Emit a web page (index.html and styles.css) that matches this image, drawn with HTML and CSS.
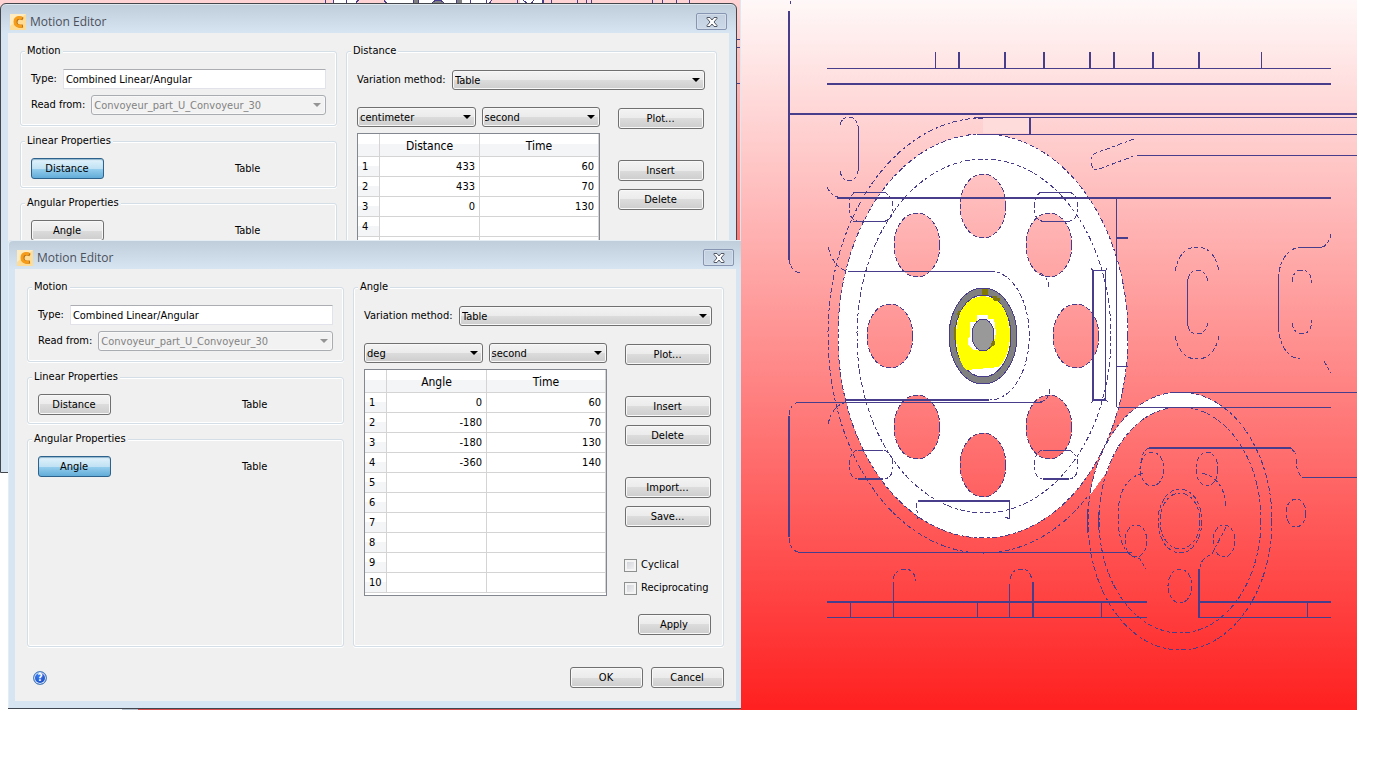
FILE: index.html
```html
<!DOCTYPE html>
<html lang="en">
<head>
    <meta charset="UTF-8">
    <meta name="viewport" content="width=device-width, initial-scale=1.0">
    <title>Motion Editor</title>
    <link rel="stylesheet" href="styles.css">
</head>
<body>
    <div class="desktop">
        <!-- older view behind the dialogs -->
        <svg class="backdrop" width="741" height="710" viewBox="0 0 741 710" aria-hidden="true">
            <defs>
                <linearGradient id="back-heat" x1="0" y1="0" x2="0" y2="240" gradientUnits="userSpaceOnUse">
                    <stop offset="0" stop-color="#ffd4d4"/>
                    <stop offset="1" stop-color="#ff7676"/>
                </linearGradient>
            </defs>
            <path fill="url(#back-heat)" d="M0 0H740V240H0Z"/>
            <path fill="#fff" d="M333 0H356V4H333ZM386 0H490V4H386ZM520 0H542V4H520Z"/>
            <path fill="#808080" d="M414 0H419V4H414ZM431 4L434 1H442L445 4ZM456 0H462V4H456Z"/>
            <path class="thin" d="M325.500 0V4M333.500 0V4M346.500 0V4M358.500 0L355 4M384 0L387 4M413.500 0V4M418.500 0V4M432 3L435 .5H441L444 3M456.500 0V4M470.500 0V4M486.500 0V4M492 0L489 4M517.500 0V4M523 0L528 4M534 0L531 4M551.500 0V4M577.500 0V4M586.500 0V4M591.500 0V4M652.500 0V4M662.500 0V4M676.500 0V4M689.500 0V4M737 39.500H740M737 47.500H740M737 83.500H740"/>
            <path class="thick" d="M543 0V4"/>
            <path fill="#dfe8f1" d="M740 0H741V240H740Z"/>
            <path fill="#d94b4b" d="M138 709H741V710H138Z"/>
            <path fill="#b9c2cc" d="M122 709H138V710H122Z"/>
        </svg>

        <svg class="scene" viewBox="741 0 616 710" role="img" aria-label="Wheel assembly">
            <defs>
                <linearGradient id="heat" x1="0" y1="0" x2="0" y2="710" gradientUnits="userSpaceOnUse">
                    <stop offset="0" stop-color="#fff8f8"/>
                    <stop offset="1" stop-color="#ff2020"/>
                </linearGradient>
            </defs>
            <path fill="url(#heat)" d="M741 0H1357V710H741Z"/>
            <path fill="#ffdcdc" d="M983 118H1029V133H983Z"/>

            <!-- small wheel rim -->
            <path fill="#fff" d="M1090 495A92 129 0 0 1 1180 392Q1203 392 1222 407H1180A80 113 0 0 0 1107 472Z"/>

            <!-- large wheel -->
            <ellipse cx="983" cy="336" rx="145" ry="202" fill="#fff"/>
            <ellipse class="sketch" cx="983" cy="336" rx="145" ry="202"/>
            <ellipse class="sketch" cx="984" cy="336" rx="127" ry="177"/>
            <path class="sketch" d="M983 118A155 217 0 0 0 828 335A155 218 0 0 0 983 553A155 218 0 0 0 1088 496"/>
            <g class="hole">
                <ellipse cx="983" cy="206" rx="23" ry="32"/>
                <ellipse cx="917" cy="245" rx="23" ry="32"/>
                <ellipse cx="1049" cy="245" rx="23" ry="32"/>
                <ellipse cx="890" cy="336" rx="23" ry="32"/>
                <ellipse cx="1076" cy="336" rx="23" ry="32"/>
                <ellipse cx="917" cy="427" rx="23" ry="32"/>
                <ellipse cx="1049" cy="427" rx="23" ry="32"/>
                <ellipse cx="983" cy="465" rx="23" ry="32"/>
            </g>

            <!-- shaft -->
            <ellipse cx="983" cy="336" rx="34" ry="48" fill="#808080" stroke="#483d8b"/>
            <ellipse cx="983" cy="336" rx="28" ry="41" fill="#fff" stroke="#483d8b"/>
            <path fill="#ff0" d="M983 296Q1008 298 1010 333Q1010 356 999 367L966 370Q956 358 956 334Q958 298 983 296Z"/>
            <path fill="#fff" d="M977 315H988V319H994L996 332L993 350H974L968 345V338L970 337V322H977Z"/>
            <path fill="#ff0" d="M976 351L993 338L995 340V351Z"/>
            <ellipse cx="983" cy="335" rx="11" ry="16" fill="#999" stroke="#483d8b"/>
            <path fill="#807800" d="M982 289H988V295H982ZM992 296H997V298H1000V301H994ZM958 311H960V315H957ZM954 327H956V340H954ZM992 341H995V345L990 348Z"/>

            <!-- frame -->
            <path class="thin" d="M790.500 1V4M827 68.500H1331M935.500 52V68M1261.500 52V68M974 117.500H1357M977 134.500H1357M1137 155.500H1357M858.500 126V171M853 192.500H885M853 221.500H886M1041 192.500H1070M1041 221.500H1070M1116.500 199V407M1116 366.500H1128M1117 407.500H1331M1170 392.500H1357M848 271.500H990M798 402.500H1042M798 552.500H1132M858 450.500H883M1043 450.500H1069M1009.500 500V519M1187.500 279V326M1278.500 274V332M1300 247.500H1322M1302 477.500H1357M827 617.500H1147M1198 617.500H1331M850.500 603V617M977.500 603V617M1101.500 603V617M1307.500 603V617M893.500 582V617M1009.500 584V617M1105.500 272V399M1092 270.500H1106M1087.500 509V533M1098.500 512V530"/>
            <path class="thick" d="M789 11V260M827 84H1331M788 114H1357M959 52V68M1005 52V68M1044 52V68M1090 52V68M1114 52V68M1153 52V68M1199 52V68M1030 118V134M837 198H1331M1117 238H1128M845 400H989M789 416V537M858 479H883M1043 479H1069M918 501H1009M1093 271V400M1093 400H1106M1149 448H1291M827 602H1147M1199 602H1331M1199 569V618M1033 582V617"/>

            <!-- slots and corners -->
            <path class="sketch" d="M840 125Q842 117 849 117Q856 117 858 126M840 171Q842 181 849 181Q856 181 858 171M827 187Q832 197 838 197M789 260Q790 270 800 273M789 415Q790 404 799 402M789 538Q790 550 798 552"/>
            <path class="sketch" d="M855 192Q849 196 849 207Q849 219 857 221M884 192Q893 196 893 207Q893 219 885 221M1041 192Q1034 196 1034 207Q1034 219 1042 221M1070 192Q1078 196 1078 207Q1078 219 1070 221"/>
            <path class="sketch" d="M857 450Q849 454 849 465Q849 477 857 479M884 450Q893 454 893 465Q893 477 885 479M1042 450Q1034 454 1034 465Q1034 477 1042 479M1069 450Q1078 454 1078 465Q1078 477 1070 479"/>
            <path class="sketch" d="M828 247Q834 269 848 271M828 424Q833 404 848 402M990 271A39 64 0 0 1 990 400M1040 402Q1049 400 1050 389M1049 287Q1048 277 1040 273M916 503L918 519M1005 517L1010 519"/>
            <path class="sketch" d="M1134 139L1096 153Q1091 155 1091 162Q1092 172 1099 169L1134 156M1091 268Q1095 273 1093 278M1107 268L1104 274M1091 403L1095 398M1108 402L1102 397"/>
            <path class="sketch" d="M1175 271Q1180 247 1197 247Q1214 247 1219 271M1188 279Q1190 270 1198 270Q1205 270 1208 281M1188 326Q1190 334 1198 334Q1205 334 1208 323M1175 336Q1180 359 1197 359Q1214 359 1219 336"/>
            <path class="sketch" d="M1279 272Q1283 250 1300 247M1322 247Q1328 246 1331 234M1279 334Q1284 357 1300 359M1292 282Q1293 270 1302 270Q1311 270 1312 284M1292 323Q1294 334 1302 334Q1311 334 1312 320M1324 361L1331 373"/>

            <!-- small wheel -->
            <ellipse class="sketch" cx="1180" cy="521" rx="92" ry="129"/>
            <ellipse class="sketch" cx="1180" cy="520" rx="81" ry="113"/>
            <ellipse class="sketch" cx="1180" cy="521" rx="22" ry="32"/>
            <ellipse class="sketch" cx="1180" cy="521" rx="20" ry="28"/>
            <ellipse class="sketch" cx="1152" cy="469" rx="12" ry="17"/>
            <ellipse class="sketch" cx="1207" cy="469" rx="11" ry="17"/>
            <ellipse class="sketch" cx="1136" cy="541" rx="11" ry="16"/>
            <ellipse class="sketch" cx="1224" cy="541" rx="11" ry="16"/>
            <ellipse class="sketch" cx="1180" cy="586" rx="12" ry="17"/>
            <ellipse class="sketch" cx="1296" cy="513" rx="10" ry="14"/>
            <path class="sketch" d="M1149 448Q1142 451 1141 463M1291 448L1296 454M1296 459Q1296 472 1302 477M1143 473Q1118 480 1118 516Q1118 555 1140 559L1146 569M1202 473Q1225 479 1226 508M1226 527L1212 554Q1200 559 1200 568M893 579Q896 569 905 569Q914 569 916 581M1010 579Q1012 569 1021 569Q1030 569 1032 580"/>
        </svg>

        <section class="window window-back">
            <header class="titlebar">
                <svg class="app-icon" viewBox="0 0 16 16" aria-hidden="true">
                    <path fill="#ffdc96" d="M0 0H16V16H0Z"/>
                    <path fill="#ffebc0" d="M0 0H16L0 12Z"/>
                    <path fill="none" stroke="#b96f14" stroke-width="3" d="M13 5Q7 2 6 8Q6 13 13 12"/>
                    <path fill="none" stroke="#f59c1a" stroke-width="3" d="M12 4Q5 2 5 8Q5 13 12 12"/>
                </svg>
                <h1>Motion Editor</h1>
                <button class="close" type="button" aria-label="Close">
                    <svg viewBox="0 0 12 10" aria-hidden="true"><path d="M1 .5H4L6 3L8 .5H11V1.500L8 5L11 8.500V9.500H8L6 7L4 9.500H1V8.500L4 5L1 1.500Z"/></svg>
                </button>
            </header>
            <form class="client">
                <div class="panels">
                    <div class="properties">
                        <fieldset class="motion">
                            <legend>Motion</legend>
                            <div class="row">
                                <label for="type-back">Type:</label>
                                <input class="text" type="text" id="type-back" value="Combined Linear/Angular">
                            </div>
                            <div class="row">
                                <label for="source-back">Read from:</label>
                                <span class="select disabled"><select id="source-back" disabled><option>Convoyeur_part_U_Convoyeur_30</option></select></span>
                            </div>
                        </fieldset>
                        <fieldset class="property">
                            <legend>Linear Properties</legend>
                            <div class="property-row"><button class="selected" type="button">Distance</button><span>Table</span></div>
                        </fieldset>
                        <fieldset class="property last">
                            <legend>Angular Properties</legend>
                            <div class="property-row"><button type="button">Angle</button><span>Table</span></div>
                        </fieldset>
                    </div>
                    <fieldset class="variation">
                        <legend>Distance</legend>
                        <div class="row method">
                            <label for="method-back">Variation method:</label>
                            <span class="select"><select id="method-back"><option>Table</option></select></span>
                        </div>
                        <div class="editor">
                            <div class="values">
                                <div class="units">
                                    <span class="select"><select aria-label="Distance unit"><option>centimeter</option></select></span>
                                    <span class="select"><select aria-label="Time unit"><option>second</option></select></span>
                                </div>
                                <div class="sheet">
                                    <table>
                                        <thead><tr><th class="num"></th><th class="value">Distance</th><th>Time</th></tr></thead>
                                        <tbody>
                                            <tr><th>1</th><td>433</td><td>60</td></tr>
                                            <tr><th>2</th><td>433</td><td>70</td></tr>
                                            <tr><th>3</th><td>0</td><td>130</td></tr>
                                            <tr><th>4</th><td></td><td></td></tr>
                                            <tr><th>5</th><td></td><td></td></tr>
                                        </tbody>
                                    </table>
                                </div>
                            </div>
                            <div class="actions">
                                <div class="stack"><button type="button">Plot...</button></div>
                                <div class="stack"><button type="button">Insert</button><button type="button">Delete</button></div>
                            </div>
                        </div>
                    </fieldset>
                </div>
            </form>
        </section>

        <section class="window window-front">
            <header class="titlebar">
                <svg class="app-icon" viewBox="0 0 16 16" aria-hidden="true">
                    <path fill="#ffdc96" d="M0 0H16V16H0Z"/>
                    <path fill="#ffebc0" d="M0 0H16L0 12Z"/>
                    <path fill="none" stroke="#b96f14" stroke-width="3" d="M13 5Q7 2 6 8Q6 13 13 12"/>
                    <path fill="none" stroke="#f59c1a" stroke-width="3" d="M12 4Q5 2 5 8Q5 13 12 12"/>
                </svg>
                <h1>Motion Editor</h1>
                <button class="close" type="button" aria-label="Close">
                    <svg viewBox="0 0 12 10" aria-hidden="true"><path d="M1 .5H4L6 3L8 .5H11V1.500L8 5L11 8.500V9.500H8L6 7L4 9.500H1V8.500L4 5L1 1.500Z"/></svg>
                </button>
            </header>
            <form class="client">
                <div class="panels">
                    <div class="properties">
                        <fieldset class="motion">
                            <legend>Motion</legend>
                            <div class="row">
                                <label for="type">Type:</label>
                                <input class="text" type="text" id="type" value="Combined Linear/Angular">
                            </div>
                            <div class="row">
                                <label for="source">Read from:</label>
                                <span class="select disabled"><select id="source" disabled><option>Convoyeur_part_U_Convoyeur_30</option></select></span>
                            </div>
                        </fieldset>
                        <fieldset class="property">
                            <legend>Linear Properties</legend>
                            <div class="property-row"><button type="button">Distance</button><span>Table</span></div>
                        </fieldset>
                        <fieldset class="property last">
                            <legend>Angular Properties</legend>
                            <div class="property-row"><button class="selected" type="button">Angle</button><span>Table</span></div>
                        </fieldset>
                    </div>
                    <fieldset class="variation">
                        <legend>Angle</legend>
                        <div class="row method">
                            <label for="method">Variation method:</label>
                            <span class="select"><select id="method"><option>Table</option></select></span>
                        </div>
                        <div class="editor">
                            <div class="values">
                                <div class="units">
                                    <span class="select"><select aria-label="Angle unit"><option>deg</option></select></span>
                                    <span class="select"><select aria-label="Time unit"><option>second</option></select></span>
                                </div>
                                <div class="sheet">
                                    <table>
                                        <thead><tr><th class="num"></th><th class="value">Angle</th><th>Time</th></tr></thead>
                                        <tbody>
                                            <tr><th>1</th><td>0</td><td>60</td></tr>
                                            <tr><th>2</th><td>-180</td><td>70</td></tr>
                                            <tr><th>3</th><td>-180</td><td>130</td></tr>
                                            <tr><th>4</th><td>-360</td><td>140</td></tr>
                                            <tr><th>5</th><td></td><td></td></tr>
                                            <tr><th>6</th><td></td><td></td></tr>
                                            <tr><th>7</th><td></td><td></td></tr>
                                            <tr><th>8</th><td></td><td></td></tr>
                                            <tr><th>9</th><td></td><td></td></tr>
                                            <tr><th>10</th><td></td><td></td></tr>
                                        </tbody>
                                    </table>
                                </div>
                            </div>
                            <div class="actions">
                                <div class="stack"><button type="button">Plot...</button></div>
                                <div class="stack"><button type="button">Insert</button><button type="button">Delete</button></div>
                                <div class="stack"><button type="button">Import...</button><button type="button">Save...</button></div>
                                <div class="stack checks">
                                    <label><input type="checkbox">Cyclical</label>
                                    <label><input type="checkbox">Reciprocating</label>
                                </div>
                                <button class="apply" type="button">Apply</button>
                            </div>
                        </div>
                    </fieldset>
                </div>
                <footer>
                    <button class="help" type="button" aria-label="Help">?</button>
                    <button type="button">OK</button>
                    <button type="button">Cancel</button>
                </footer>
            </form>
        </section>
    </div>
</body>
</html>
```
FILE: styles.css
```css
* {
    box-sizing: border-box;
}
body {
    margin: 0;
    background: #fff;
    color: #000;
    font-family: "DejaVu Sans Condensed", "DejaVu Sans", sans-serif;
    font-size: 11px;
    line-height: 14px;
}
.desktop {
    position: relative;
    min-height: 100vh;
    overflow: hidden;
}
.backdrop {
    position: absolute;
    left: 0;
    top: 0;
}
.scene {
    display: block;
    width: calc(100% - 761px);
    margin-left: 741px;
}
.backdrop,
.scene {
    shape-rendering: crispEdges;
}
.thin,
.thick,
.sketch {
    fill: none;
    stroke: #483d8b;
}
.thick {
    stroke-width: 2px;
}
.sketch {
    stroke-dasharray: 5 2 3 3;
}
.hole {
    fill: url(#heat);
    stroke: #483d8b;
    stroke-dasharray: 5 2;
}

/* windows */
.window {
    position: absolute;
    background: linear-gradient(#bfcddb, #d7e4f1 29px);
}
.window-back {
    left: 0;
    top: 3px;
    width: 737px;
    height: 470px;
    padding: 0 7px 7px;
    border: 1px solid #43474c;
    border-radius: 6px 6px 0 0;
    box-shadow: inset 0 1px #dfe7ef;
}
.window-front {
    left: 8px;
    top: 240px;
    width: 733px;
    padding: 0 5px 7px 7px;
    border-bottom: 1px solid #3f4650;
    border-radius: 4px 0 0 0;
    box-shadow: inset 1px 1px #e4ecf4;
}
.titlebar {
    display: flex;
    align-items: center;
    height: 29px;
    padding: 6px 2px 0;
}
.app-icon {
    width: 16px;
    height: 16px;
}
.titlebar h1 {
    flex: 1;
    margin: 0 0 0 4px;
    color: #4a505a;
    font-family: "Open Sans", sans-serif;
    font-size: 12px;
    font-weight: normal;
    line-height: 16px;
}
.client {
    min-height: 432px;
    padding: 11px 12px 13px;
    background: #f0f0f0;
}
.panels {
    display: grid;
    grid-template-columns: 317px 1fr;
    gap: 9px;
    min-height: 367px;
}
.properties {
    display: flex;
    flex-direction: column;
    gap: 8px;
}
fieldset {
    min-width: 0;
    margin: 0;
    padding: 10px;
    border: 1px solid #d3dee7;
    border-radius: 3px;
    box-shadow: inset 0 0 0 1px #fff, 0 1px #fff;
}
legend {
    margin-left: -6px;
    padding: 0 2px;
    background: #f0f0f0;
}
.motion {
    padding-top: 11px;
}
.property {
    padding-bottom: 8px;
}
.last {
    flex: 1;
}
.row {
    display: flex;
    align-items: center;
}
.row + .row {
    margin-top: 6px;
}
.row label {
    padding-right: 6px;
    white-space: nowrap;
}
.text {
    flex: 1;
    height: 20px;
    padding: 1px 2px 0;
    border: 1px solid #e2e3ea;
    border-top-color: #abadb3;
    border-radius: 1px;
    background: #fff;
    font: inherit;
}
.property-row {
    display: grid;
    grid-template-columns: 73px 1fr;
    gap: 131px;
    align-items: center;
}
.variation {
    padding: 12px 11px 10px 10px;
}
.method label {
    width: 95px;
    padding: 0;
}

/* controls */
button,
select {
    border: 1px solid #707070;
    border-radius: 3px;
    background: linear-gradient(#f3f3f3, #ebebeb 50%, #dcdcdc 50%, #cdcdcd);
    box-shadow: inset 0 0 0 1px #f8f8f8;
    color: #000;
    font: inherit;
}
button {
    width: 73px;
    height: 21px;
    padding: 1px 1px 0 0;
}
.selected {
    border-color: #2c628b;
    background: linear-gradient(#e3f3fb, #c0e2f4 50%, #98d0ee 50%, #62acd8);
    box-shadow: inset 0 1px 1px #8fb6cd;
}
.select {
    position: relative;
    flex: 1;
    display: flex;
}
.select select {
    width: 100%;
    height: 20px;
    padding: 1px 20px 0 2px;
    appearance: none;
}
.select::after {
    content: "";
    position: absolute;
    top: 8px;
    right: 5px;
    border: 4px solid transparent;
    border-top-color: #000;
    border-bottom: 0;
}
.disabled select {
    border-color: #a9adb2;
    background: #f2f2f2;
    color: #838383;
    opacity: 1;
}
.disabled::after {
    border-top-color: #949494;
}
.close {
    width: 31px;
    height: 17px;
    padding: 0;
    border-color: #8795b2;
    border-radius: 2px;
    background: linear-gradient(#c2cfdf, #ccd9e8);
    box-shadow: inset 0 0 0 1px #d3deea;
}
.close svg {
    display: block;
    width: 12px;
    height: 10px;
    margin: 0 auto;
    fill: #fff;
    stroke: #525766;
}

/* table editor */
.editor {
    display: grid;
    grid-template-columns: 1fr 87px;
    gap: 18px;
    align-items: start;
    margin-top: 17px;
}
.units {
    display: flex;
    gap: 6px;
    margin-bottom: 6px;
}
.sheet {
    padding-bottom: 2px;
    border: 1px solid #828790;
    background: #fff;
}
table {
    width: 100%;
    table-layout: fixed;
    border-collapse: separate;
    border-spacing: 0;
}
th,
td {
    height: 20px;
    padding: 1px 4px 0;
    border-right: 1px solid #d4d4d4;
    border-bottom: 1px solid #d4d4d4;
    text-align: right;
}
th {
    background: linear-gradient(#fff 45%, #f4f5f7 45%);
    font-weight: normal;
}
thead th {
    height: 23px;
    font-size: 12px;
    text-align: center;
}
tbody th {
    text-align: left;
}
.num {
    width: 22px;
}
.value {
    width: 100px;
}
.actions {
    display: flex;
    flex-direction: column;
    margin: 1px 1px 0 0;
}
.stack {
    display: flex;
    flex-direction: column;
    gap: 8px;
}
.stack + .stack {
    margin-top: 31px;
}
.stack button {
    width: 100%;
}
.checks {
    gap: 9px;
}
.checks label {
    display: flex;
    align-items: center;
    gap: 4px;
    white-space: nowrap;
}
.checks input {
    width: 13px;
    height: 13px;
    margin: 0 0 0 -1px;
    border: 1px solid #8e8f8f;
    background: linear-gradient(135deg, #cbcfd5, #f6f6f6);
    box-shadow: inset 0 0 0 2px #f4f4f4;
    appearance: none;
}
.apply {
    align-self: flex-end;
    margin-top: 19px;
}
footer {
    display: flex;
    gap: 8px;
    align-items: center;
    margin-top: 20px;
}
.help {
    width: 14px;
    height: 14px;
    margin: 0 auto 0 6px;
    padding: 0;
    border: 1px solid #4d7fb8;
    border-radius: 50%;
    background: radial-gradient(circle at 40% 30%, #3f7bf0, #0b3fb4);
    box-shadow: inset 0 0 0 1px #dcebfa;
    color: #fff;
    font-size: 10px;
    font-weight: bold;
    line-height: 12px;
}
```
